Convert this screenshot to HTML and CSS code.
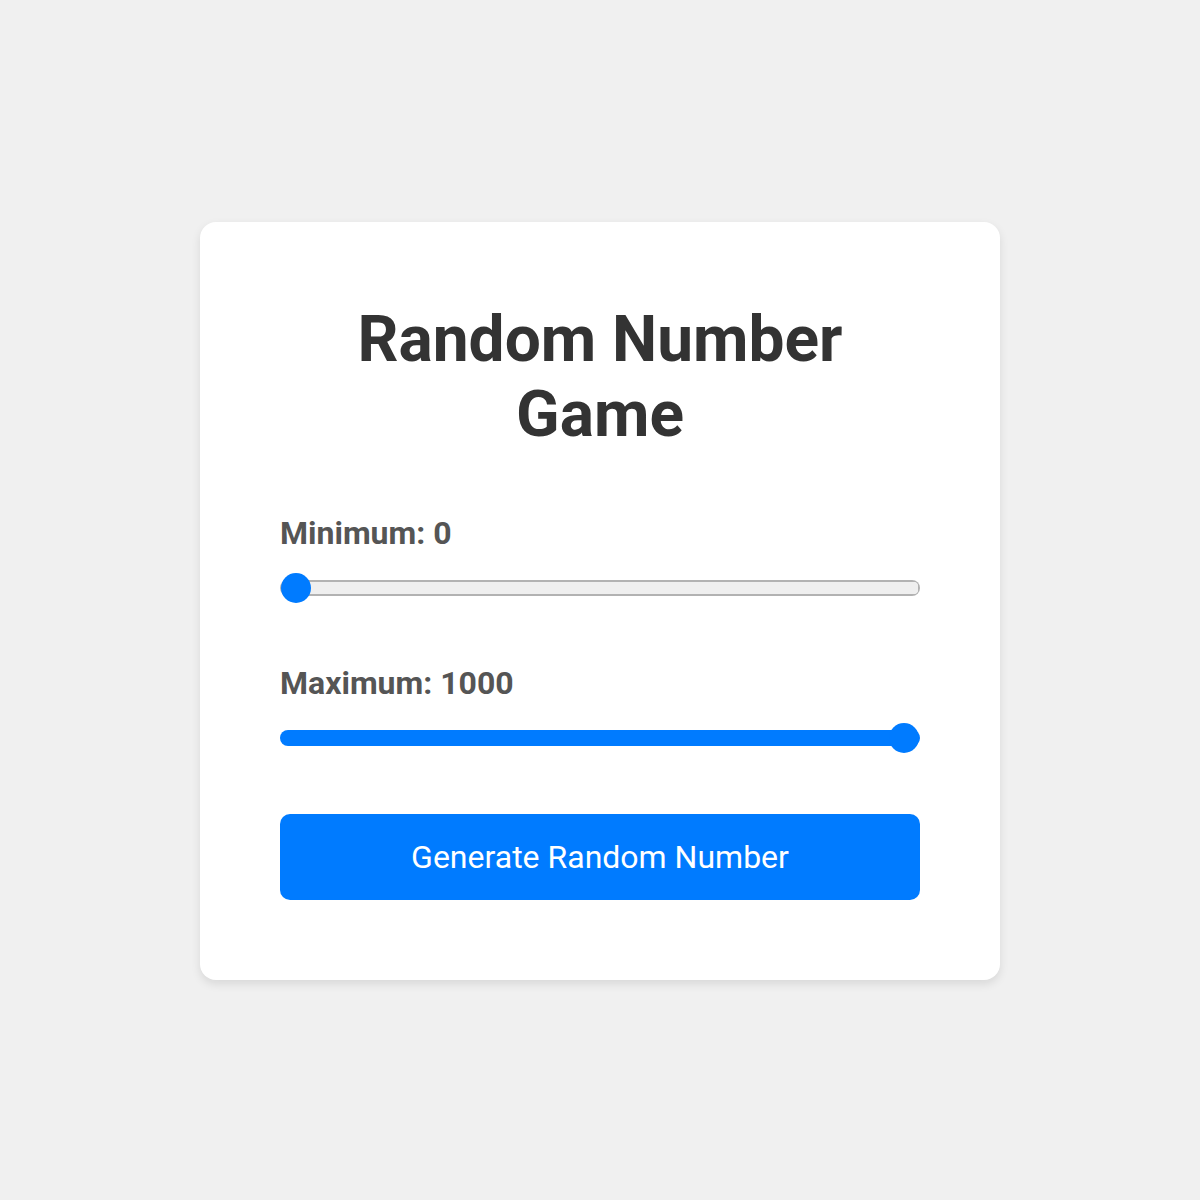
FILE: index.html
```html
<!DOCTYPE html>
<html lang="en">
<head>
<meta charset="utf-8">
<title>Random Number Game</title>
<link rel="stylesheet" href="styles.css">
</head>
<body>
  <main class="card">
    <h1 class="title">Random Number Game</h1>
    <div class="field">
      <label class="field-label" for="min">Minimum: <span>0</span></label>
      <input class="range" id="min" type="range" min="0" max="1000" value="0" style="--fill: 0%">
    </div>
    <div class="field">
      <label class="field-label" for="max">Maximum: <span>1000</span></label>
      <input class="range" id="max" type="range" min="0" max="1000" value="1000" style="--fill: 100%">
    </div>
    <button class="generate" type="button">Generate Random Number</button>
  </main>
</body>
</html>
```

FILE: styles.css
```css
* {
  box-sizing: border-box;
}

html,
body {
  margin: 0;
  padding: 0;
}

body {
  min-height: 100vh;
  padding-top: 2px;
  display: flex;
  align-items: center;
  justify-content: center;
  background: #f0f0f0;
  font-family: Roboto, "Liberation Sans", Arial, sans-serif;
}

.card {
  width: 800px;
  padding: 80px;
  background: #ffffff;
  border-radius: 16px;
  box-shadow: 0 4px 10px rgba(0, 0, 0, 0.1);
  display: flex;
  flex-direction: column;
}

.title {
  margin: 0 0 62px;
  font-size: 64px;
  line-height: 75px;
  font-weight: 700;
  color: #333333;
  text-align: center;
}

.field {
  display: flex;
  flex-direction: column;
  margin-bottom: 68px;
}

.field-label {
  font-size: 32px;
  line-height: 38px;
  font-weight: 700;
  color: #555555;
  margin-bottom: 28px;
}

/* slider: filled part up to the thumb is blue, the rest is light gray
   with a 2px ring (1px real border + 1px painted inside it) */
.range {
  -webkit-appearance: none;
  appearance: none;
  display: block;
  width: 100%;
  height: 16px;
  margin: 0;
  padding: 0;
  border: 1px solid transparent;
  border-radius: 8px;
  background:
    linear-gradient(to right, #007bff var(--fill), #efefef var(--fill)) center / calc(100% - 2px) calc(100% - 2px) no-repeat padding-box,
    linear-gradient(to right, #007bff var(--fill), #b2b2b2 var(--fill)) border-box;
  outline: none;
}

.range::-webkit-slider-thumb {
  -webkit-appearance: none;
  appearance: none;
  width: 30px;
  height: 30px;
  border: none;
  border-radius: 50%;
  background: #007bff;
  cursor: pointer;
}

.range::-moz-range-thumb {
  width: 30px;
  height: 30px;
  border: none;
  border-radius: 50%;
  background: #007bff;
}

.generate {
  display: block;
  width: 100%;
  height: 86px;
  padding: 0;
  border: none;
  border-radius: 10px;
  background: #007bff;
  color: #ffffff;
  font-family: inherit;
  font-size: 32px;
  font-weight: 400;
  cursor: pointer;
}
```
